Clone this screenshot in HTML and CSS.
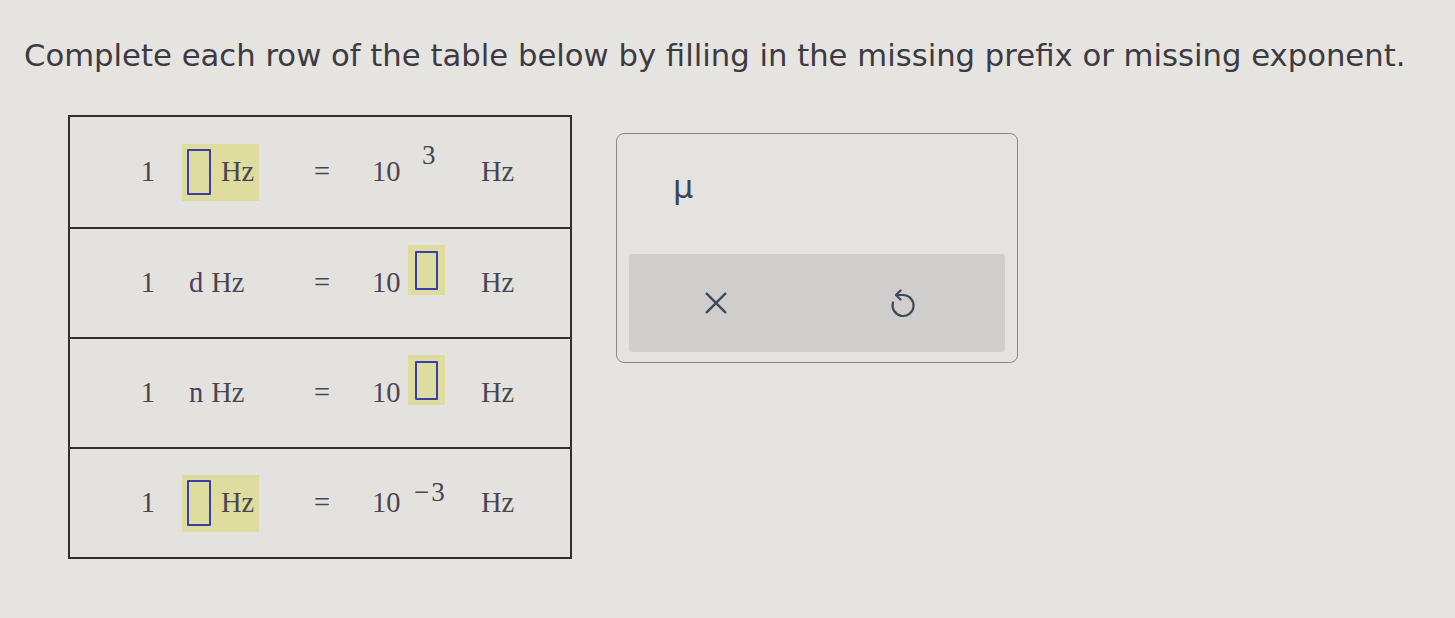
FILE: index.html
```html
<!DOCTYPE html>
<html>
<head>
<meta charset="utf-8">
<link rel="stylesheet" href="styles.css">
</head>
<body>
<div class="page">
  <p class="prompt">Complete each row of the table below by filling in the missing prefix or missing exponent.</p>
  <div class="work">
    <div class="table">
      <div class="row">
        <span class="one">1</span>
        <span class="prefix hl"><span class="box"></span><span class="unit">Hz</span></span>
        <span class="eq">=</span>
        <span class="ten">10</span>
        <span class="exp"><span class="sup">3</span></span>
        <span class="hz">Hz</span>
      </div>
      <div class="row">
        <span class="one">1</span>
        <span class="prefix"><span class="pl">d</span><span class="unit">Hz</span></span>
        <span class="eq">=</span>
        <span class="ten">10</span>
        <span class="exp"><span class="hl small"><span class="box sbox"></span></span></span>
        <span class="hz">Hz</span>
      </div>
      <div class="row">
        <span class="one">1</span>
        <span class="prefix"><span class="pl">n</span><span class="unit">Hz</span></span>
        <span class="eq">=</span>
        <span class="ten">10</span>
        <span class="exp"><span class="hl small"><span class="box sbox"></span></span></span>
        <span class="hz">Hz</span>
      </div>
      <div class="row">
        <span class="one">1</span>
        <span class="prefix hl"><span class="box"></span><span class="unit">Hz</span></span>
        <span class="eq">=</span>
        <span class="ten">10</span>
        <span class="exp"><span class="sup neg">&minus;3</span></span>
        <span class="hz">Hz</span>
      </div>
    </div>
    <div class="panel">
      <div class="keys"><span class="mu">&mu;</span></div>
      <div class="actions">
        <span class="btn">
          <svg width="32" height="32" viewBox="0 0 24 24"><path d="M5 5 L19 19 M19 5 L5 19" stroke="#3d4a55" stroke-width="1.8" fill="none" stroke-linecap="round"/></svg>
        </span>
        <span class="btn">
          <svg width="26" height="34" viewBox="0 0 26 34"><path d="M6 9 H13 A10.5 10.5 0 1 1 3 16.5" stroke="#3d4a55" stroke-width="2.2" fill="none" stroke-linecap="round"/><path d="M10.5 4.5 L6 9 L10.5 13.5" stroke="#3d4a55" stroke-width="2.2" fill="none" stroke-linecap="round" stroke-linejoin="round"/></svg>
        </span>
      </div>
    </div>
  </div>
</div>
</body>
</html>
```

FILE: styles.css
```css
html, body {
  margin: 0;
  padding: 0;
  background: #e5e4e1;
}
.page {
  width: 1455px;
  height: 618px;
  overflow: hidden;
  padding: 34px 0 0 24px;
  box-sizing: border-box;
}
.prompt {
  margin: 0;
  font-family: "DejaVu Sans", Verdana, sans-serif;
  font-size: 30.7px;
  color: #3e3a42;
  line-height: 44px;
  white-space: nowrap;
}
.work {
  display: flex;
  align-items: flex-start;
  margin-top: 37px;
  margin-left: 44px;
}
.table {
  width: 500px;
  border: 2px solid #2f2f30;
  background: #e3e2df;
  font-family: "Liberation Serif", "Times New Roman", serif;
  color: #4a4650;
  font-size: 28.5px;
}
.row {
  height: 110px;
  display: grid;
  grid-template-columns: 86px 158px 58px 46px 63px 1fr;
  align-items: center;
  border-top: 2px solid #2f2f30;
  box-sizing: border-box;
}
.row:first-child { border-top: none; }
.one { grid-column: 1; justify-self: end; padding-right: 1px; }
.prefix {
  grid-column: 2;
  justify-self: start;
  margin-left: 26px;
  display: flex;
  align-items: center;
  height: 57px;
  padding: 0 5px 0 5px;
}
.prefix .pl { margin-left: 2px; margin-right: 8px; color: #4a4060; }
.hl { background: #dedc9e; }
.box {
  display: inline-block;
  width: 20px;
  height: 42px;
  border: 2px solid #3b3fae;
  border-radius: 1px;
  margin-right: 10px;
}
.unit { line-height: 1; }
.eq { grid-column: 3; justify-self: start; }
.ten { grid-column: 4; justify-self: start; }
.exp { grid-column: 5; align-self: start; padding-top: 22px; justify-self: start; }
.sup { display: inline-block; margin-left: 4px; font-size: 27px; }
.sup.neg { margin-left: -4px; padding-top: 6px; letter-spacing: 2px; }
.small {
  display: inline-block;
  padding: 6px 7px 5px 7px;
  margin-left: -10px;
  margin-top: -6px;
}
.sbox {
  width: 19px;
  height: 35px;
  margin: 0;
  display: block;
}
.hz { grid-column: 6; justify-self: start; }

.panel {
  margin-left: 44px;
  margin-top: 18px;
  width: 402px;
  height: 230px;
  border: 1.5px solid #8a8a8c;
  border-radius: 8px;
  box-sizing: border-box;
  padding: 0 12px 10px 12px;
  display: flex;
  flex-direction: column;
  background: #e4e3e0;
}
.keys {
  height: 120px;
  display: flex;
  align-items: center;
  padding-left: 44px;
}
.mu {
  font-family: "DejaVu Sans", Verdana, sans-serif;
  font-size: 32px;
  color: #3c4556;
  margin-top: -14px;
}
.actions {
  flex: 1;
  background: #cfcecd;
  border-radius: 3px;
  display: flex;
  align-items: center;
  padding-left: 57px;
  gap: 127px;
}
.btn { display: flex; align-items: center; justify-content: center; width: 60px; height: 60px; }
```
